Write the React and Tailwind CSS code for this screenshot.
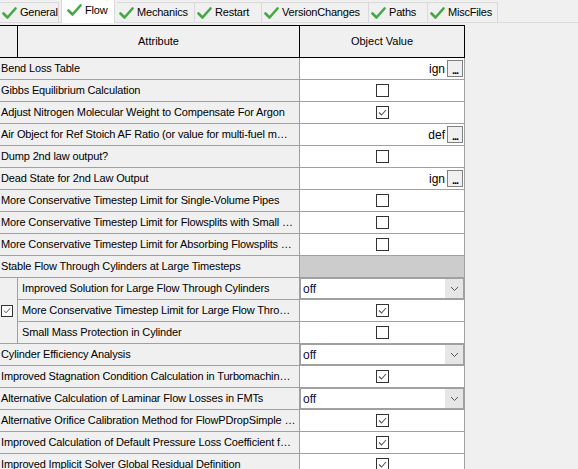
import React from "react";

const font = { fontFamily: '"Liberation Sans", Arial, sans-serif' };

function Tick() {
  return (
    <svg width="15" height="12" viewBox="0 0 15 12" className="shrink-0">
      <path d="M1.5 6.5 L5.5 10.5 L13.5 1.5" fill="none" stroke="#45a845" strokeWidth="2.6" strokeLinecap="round" strokeLinejoin="round" />
    </svg>
  );
}

const tabs = [
  { label: "General", w: "w-[59px]" },
  { label: "Flow", w: "w-[54px]", active: true },
  { label: "Mechanics", w: "w-[78px]" },
  { label: "Restart", w: "w-[67px]" },
  { label: "VersionChanges", w: "w-[107px]" },
  { label: "Paths", w: "w-[59px]" },
  { label: "MiscFiles", w: "w-[70px]" },
];

function Checkbox({ checked, small }) {
  return (
    <div className={`${small ? "w-[12px] h-[12px]" : "w-[13px] h-[13px]"} border border-[#333333] bg-white flex items-center justify-center`}>
      {checked && (
        <svg width="11" height="11" viewBox="0 0 11 11">
          <path d="M2 5.5 L4.5 8 L9 3" fill="none" stroke="#555555" strokeWidth="1.1" />
        </svg>
      )}
    </div>
  );
}

function Value({ v }) {
  if (v.type === "check")
    return (
      <div className="flex-1 flex items-center justify-center">
        <Checkbox checked={v.checked} />
      </div>
    );
  if (v.type === "dots")
    return (
      <div className="flex-1 flex items-center justify-end pr-[1px] gap-[2px]">
        <span className="text-[12px] text-black">{v.text}</span>
        <div className="w-[16px] h-[17px] border border-[#808080] bg-[#f0f0f0] flex items-end justify-center pb-[2px]">
          <span className="text-[11px] leading-[8px] font-bold tracking-[-1px]">...</span>
        </div>
      </div>
    );
  if (v.type === "select")
    return (
      <div className="flex-1 h-full flex border border-[#a0a0a0] bg-white">
        <div className="flex-1 flex items-center pl-[2px] text-[12px] text-[#10103a]">off</div>
        <div className="w-[18px] bg-[#e6e6e6] flex items-center justify-center">
          <svg width="9" height="6" viewBox="0 0 9 6">
            <path d="M1 1 L4.5 4.5 L8 1" fill="none" stroke="#555555" strokeWidth="1" />
          </svg>
        </div>
      </div>
    );
  if (v.type === "gray") return <div className="flex-1 h-full bg-[#cccccc]" />;
  return <div className="flex-1" />;
}

function Row({ label, v, indent }) {
  return (
    <div className="flex h-[22px] border-b border-[#a0a0a0]">
      <div className={`${indent ? "w-[282px] pl-[4px]" : "w-[300px] pl-[1px]"} bg-[#f0f0f0] border-r border-[#a0a0a0] flex items-center text-[11px] tracking-[-0.15px] text-black whitespace-nowrap overflow-hidden`}>
        {label}
      </div>
      <div className={`w-[165px] border-r border-[#a0a0a0] flex items-stretch ${v.type === "gray" ? "bg-[#cccccc]" : "bg-white"}`}>
        <Value v={v} />
      </div>
    </div>
  );
}

const top = [
  ["Bend Loss Table", { type: "dots", text: "ign" }],
  ["Gibbs Equilibrium Calculation", { type: "check", checked: false }],
  ["Adjust Nitrogen Molecular Weight to Compensate For Argon", { type: "check", checked: true }],
  ["Air Object for Ref Stoich AF Ratio (or value for multi-fuel m…", { type: "dots", text: "def" }],
  ["Dump 2nd law output?", { type: "check", checked: false }],
  ["Dead State for 2nd Law Output", { type: "dots", text: "ign" }],
  ["More Conservative Timestep Limit for Single-Volume Pipes", { type: "check", checked: false }],
  ["More Conservative Timestep Limit for Flowsplits with Small …", { type: "check", checked: false }],
  ["More Conservative Timestep Limit for Absorbing Flowsplits …", { type: "check", checked: false }],
  ["Stable Flow Through Cylinders at Large Timesteps", { type: "gray" }],
];

const group = [
  ["Improved Solution for Large Flow Through Cylinders", { type: "select" }],
  ["More Conservative Timestep Limit for Large Flow Thro…", { type: "check", checked: true }],
  ["Small Mass Protection in Cylinder", { type: "check", checked: false }],
];

const bottom = [
  ["Cylinder Efficiency Analysis", { type: "select" }],
  ["Improved Stagnation Condition Calculation in Turbomachin…", { type: "check", checked: true }],
  ["Alternative Calculation of Laminar Flow Losses in FMTs", { type: "select" }],
  ["Alternative Orifice Calibration Method for FlowPDropSimple …", { type: "check", checked: true }],
  ["Improved Calculation of Default Pressure Loss Coefficient f…", { type: "check", checked: true }],
  ["Improved Implicit Solver Global Residual Definition", { type: "check", checked: true }],
];

export default function App() {
  return (
    <div className="w-[578px] h-[469px] overflow-hidden bg-[#f0f0f0]" style={font}>
      {/* Tabs */}
      <div className="h-[23px] border-b border-[#d9d9d9] flex items-end">
        {tabs.map((t) => (
          <div
            key={t.label}
            className={`${t.w} shrink-0 flex items-center gap-[3px] text-[11px] tracking-[-0.2px] text-black border-[#d9d9d9] whitespace-nowrap ${
              t.active
                ? "h-[23px] -mb-[1px] bg-white border-x mx-[2px] pl-[5px] pb-[3px]"
                : "h-[20px] bg-[#f0f0f0] border-t border-r pl-[2px]"
            }`}
          >
            <Tick />
            <span>{t.label}</span>
          </div>
        ))}
      </div>

      {/* Table */}
      <div className="mt-[2px] w-[465px]">
        <div className="flex h-[33px] border-y border-black bg-[#f0f0f0] text-[11px] text-black">
          <div className="w-[18px] border-r border-black" />
          <div className="w-[282px] border-r border-black flex items-center justify-center">Attribute</div>
          <div className="w-[165px] border-r border-black flex items-center justify-center">Object Value</div>
        </div>

        {top.map(([l, v]) => (
          <Row key={l} label={l} v={v} />
        ))}

        <div className="flex">
          <div className="w-[18px] border-r border-b border-[#a0a0a0] bg-[#f0f0f0] flex items-center pl-[1px]">
            <Checkbox checked small />
          </div>
          <div className="flex flex-col">
            {group.map(([l, v]) => (
              <Row key={l} label={l} v={v} indent />
            ))}
          </div>
        </div>

        {bottom.map(([l, v]) => (
          <Row key={l} label={l} v={v} />
        ))}
      </div>
    </div>
  );
}
